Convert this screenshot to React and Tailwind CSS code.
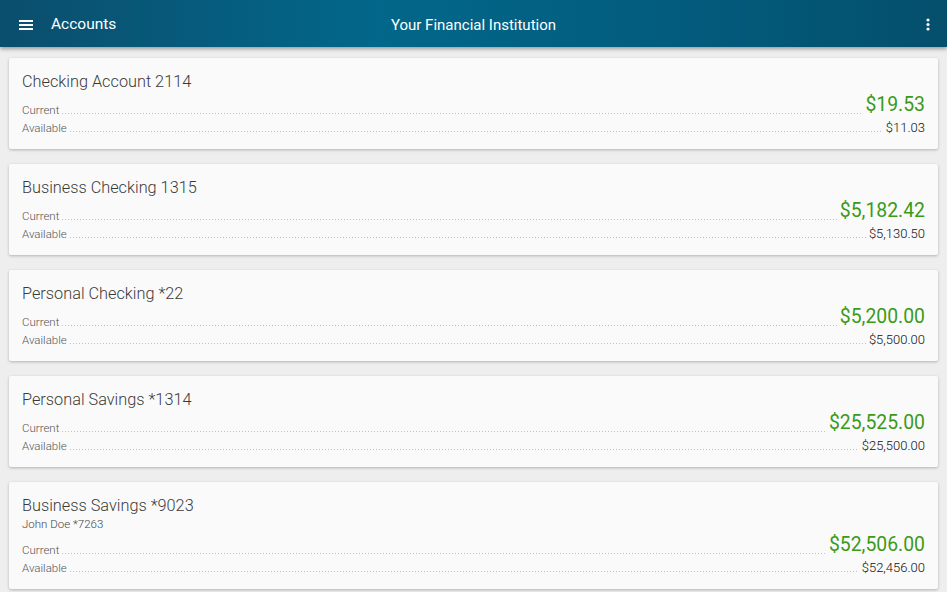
import React from 'react';

const ACCOUNTS = [
  { name: 'Checking Account 2114', current: '$19.53', available: '$11.03' },
  { name: 'Business Checking 1315', current: '$5,182.42', available: '$5,130.50' },
  { name: 'Personal Checking *22', current: '$5,200.00', available: '$5,500.00' },
  { name: 'Personal Savings *1314', current: '$25,525.00', available: '$25,500.00' },
  { name: 'Business Savings *9023', owner: 'John Doe *7263', current: '$52,506.00', available: '$52,456.00' },
];

function Dots({ className }) {
  return (
    <span
      className={`mx-[3px] h-px flex-1 bg-[linear-gradient(to_right,#c2c2c2_1px,transparent_1px)] bg-[length:3px_1px] ${className}`}
    />
  );
}

function AccountCard({ account }) {
  return (
    <div className="rounded-[2px] bg-[#fafafa] px-[13px] pt-[13px] pb-[13px] shadow-[0_1px_3px_rgba(0,0,0,0.25)]">
      <div className="text-[16.3px] leading-[22px] font-light text-[#3a3a3a]">{account.name}</div>
      {account.owner && (
        <div className="text-[11.5px] leading-[14px] font-light text-[#444]">{account.owner}</div>
      )}
      <div className={`flex items-end ${account.owner ? 'mt-[2px]' : ''}`}>
        <span className="text-[11.5px] leading-[14px] font-light text-[#555]">Current</span>
        <Dots className="mb-[3px]" />
        <span className="text-[19.4px] leading-[24px] text-[#3a9a1a]">{account.current}</span>
      </div>
      <div className="mt-[3px] flex items-end">
        <span className="text-[11.5px] leading-[16px] font-light text-[#555]">Available</span>
        <Dots className="mb-[4px]" />
        <span className="text-[13px] leading-[16px] font-light text-[#111]">{account.available}</span>
      </div>
    </div>
  );
}

export default function App() {
  return (
    <div className="h-[592px] w-[947px] overflow-hidden bg-[#eeeeee] font-['Roboto','Liberation_Sans',sans-serif]">
      <header className="relative z-10 flex h-[47px] items-center bg-[linear-gradient(90deg,#0b4e6d_0%,#02678a_40%,#035a7b_75%,#044f6c_100%)] px-[19px] pt-[2px] text-white shadow-[0_2px_4px_rgba(0,0,0,0.35)]">
        <svg width="14" height="12" viewBox="0 0 14 12" className="shrink-0">
          <rect x="0" y="1" width="14" height="2" fill="white" />
          <rect x="0" y="5" width="14" height="2" fill="white" />
          <rect x="0" y="9" width="14" height="2" fill="white" />
        </svg>
        <div className="ml-[18px] text-[15.5px] font-normal">Accounts</div>
        <div className="pointer-events-none absolute left-0 right-0 pt-[2px] text-center text-[15px]">
          Your Financial Institution
        </div>
        <svg width="4" height="13" viewBox="0 0 4 13" className="ml-auto mr-[-2px] shrink-0">
          <circle cx="2" cy="2" r="1.6" fill="white" />
          <circle cx="2" cy="6.5" r="1.6" fill="white" />
          <circle cx="2" cy="11" r="1.6" fill="white" />
        </svg>
      </header>
      <main className="flex flex-col gap-[15px] px-[9px] pt-[11px]">
        {ACCOUNTS.map((a) => (
          <AccountCard key={a.name} account={a} />
        ))}
      </main>
    </div>
  );
}
